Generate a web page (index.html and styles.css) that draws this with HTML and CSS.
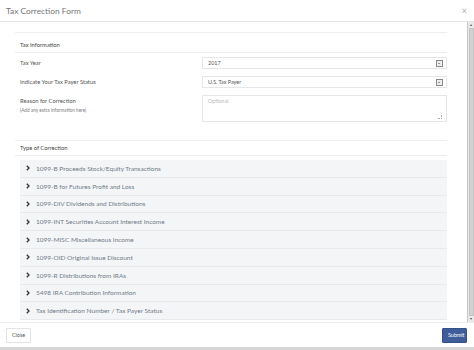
FILE: index.html
```html
<!DOCTYPE html>
<html lang="en">
<head>
    <meta charset="UTF-8">
    <title>Tax Correction Form</title>
    <link rel="stylesheet" href="styles.css">
</head>
<body>
    <div class="modal">
        <div class="modal-header">
            <span class="modal-title">Tax Correction Form</span>
            <span class="close-x">&times;</span>
        </div>

        <div class="modal-main">
            <div class="content">
                <div class="section first">
                    <div class="section-title">Tax Information</div>
                </div>

                <div class="form-row">
                    <label class="label">Tax Year</label>
                    <div class="select">
                        <span>2017</span>
                        <span class="caret"></span>
                    </div>
                </div>
                <div class="form-row">
                    <label class="label">Indicate Your Tax Payer Status</label>
                    <div class="select">
                        <span>U.S. Tax Payer</span>
                        <span class="caret"></span>
                    </div>
                </div>
                <div class="form-row">
                    <div class="label">
                        Reason for Correction
                        <div class="hint">(Add any extra information here)</div>
                    </div>
                    <div class="textarea">
                        <span class="placeholder">Optional</span>
                        <span class="grip"></span>
                    </div>
                </div>

                <div class="section">
                    <div class="section-title">Type of Correction</div>
                </div>

                <div class="accordion">
                    <div class="acc-item"><svg class="chev" viewBox="0 0 4 6"><polyline points="0.8,0.7 3,3 0.8,5.3"/></svg>1099-B Proceeds Stock/Equity Transactions</div>
                    <div class="acc-item"><svg class="chev" viewBox="0 0 4 6"><polyline points="0.8,0.7 3,3 0.8,5.3"/></svg>1099-B for Futures Profit and Loss</div>
                    <div class="acc-item"><svg class="chev" viewBox="0 0 4 6"><polyline points="0.8,0.7 3,3 0.8,5.3"/></svg>1099-DIV Dividends and Distributions</div>
                    <div class="acc-item"><svg class="chev" viewBox="0 0 4 6"><polyline points="0.8,0.7 3,3 0.8,5.3"/></svg>1099-INT Securities Account Interest Income</div>
                    <div class="acc-item"><svg class="chev" viewBox="0 0 4 6"><polyline points="0.8,0.7 3,3 0.8,5.3"/></svg>1099-MISC Miscellaneous Income</div>
                    <div class="acc-item"><svg class="chev" viewBox="0 0 4 6"><polyline points="0.8,0.7 3,3 0.8,5.3"/></svg>1099-OID Original Issue Discount</div>
                    <div class="acc-item"><svg class="chev" viewBox="0 0 4 6"><polyline points="0.8,0.7 3,3 0.8,5.3"/></svg>1099-R Distributions from IRAs</div>
                    <div class="acc-item"><svg class="chev" viewBox="0 0 4 6"><polyline points="0.8,0.7 3,3 0.8,5.3"/></svg>5498 IRA Contribution Information</div>
                    <div class="acc-item"><svg class="chev" viewBox="0 0 4 6"><polyline points="0.8,0.7 3,3 0.8,5.3"/></svg>Tax Identification Number / Tax Payer Status</div>
                </div>
            </div>

            <!-- scrollbar of the modal body -->
            <div class="scrollbar">
                <span class="arrow up"></span>
                <span class="thumb"></span>
                <span class="arrow down"></span>
            </div>
        </div>

        <div class="modal-footer">
            <button type="button" class="btn">Close</button>
            <button type="button" class="btn primary">Submit</button>
        </div>
    </div>
</body>
</html>
```

FILE: styles.css
```css
body {
    margin: 0;
    background-color: #d6d6d6;
    font-family: Lato, "Liberation Sans", sans-serif;
    color: #555;
}

.modal {
    height: 347px;
    background-color: #fff;
    display: flex;
    flex-direction: column;
}

.modal-header {
    height: 21px;
    border-bottom: 1px solid #e4e4e4;
    padding: 0 7px 0 6px;
    display: flex;
    align-items: center;
    justify-content: space-between;
}

.modal-title {
    font-size: 8.4px;
    color: #777;
}

.close-x {
    font-size: 9px;
    color: #aaa;
}

.modal-main {
    flex: 1;
    display: flex;
    overflow: hidden;
}

.content {
    flex: 1;
    padding: 10px 20px 0 15px;
    overflow: hidden;
}

.section {
    border-top: 1px solid #f0f0f0;
    margin-top: 18px;
}

.section.first {
    margin-top: 0;
    padding-top: 4px;
}

.section-title {
    height: 15px;
    line-height: 15px;
    padding-left: 5px;
    border-bottom: 1px solid #ececec;
    font-size: 5.8px;
    color: #444;
}

.section:not(.first) .section-title {
    height: 14px;
    line-height: 14px;
}

.form-row {
    display: flex;
    justify-content: space-between;
    margin-top: 4px;
}

.form-row + .form-row {
    margin-top: 7px;
}

.label {
    padding: 2px 0 0 5px;
    font-size: 5.8px;
    color: #555;
}

.hint {
    font-size: 4.7px;
    color: #808080;
    margin-top: 3px;
}

.select {
    box-sizing: border-box;
    width: 245px;
    height: 12px;
    border: 1px solid #e6e6e6;
    padding: 0 3px 0 5px;
    display: flex;
    align-items: center;
    justify-content: space-between;
    font-size: 5.4px;
    color: #555;
}

.caret {
    width: 5px;
    height: 5px;
    border: 1px solid #888;
    background-color: #eee;
    position: relative;
}

.caret::after {
    content: "";
    position: absolute;
    left: 1px;
    top: 2px;
    border-left: 1.5px solid transparent;
    border-right: 1.5px solid transparent;
    border-top: 1.5px solid #333;
}

.textarea {
    box-sizing: border-box;
    width: 245px;
    height: 27px;
    border: 1px solid #e6e6e6;
    padding: 2px 4px 2px 5px;
    display: flex;
    justify-content: space-between;
}

.placeholder {
    font-size: 5.4px;
    color: #bbb;
}

.grip {
    align-self: flex-end;
    width: 3px;
    height: 3px;
    border-right: 1px dotted #aaa;
    border-bottom: 1px dotted #aaa;
}

.accordion {
    margin: 4px 0 0 5px;
    background-color: #f4f5f7;
}

.acc-item {
    height: 16.8px;
    border-bottom: 1px solid #e7e9ec;
    display: flex;
    align-items: center;
    padding-left: 5px;
    font-size: 6.5px;
    color: #717c89;
}

.chev {
    width: 4px;
    height: 6px;
    margin: 0 6px 0 1px;
    fill: none;
    stroke: #333;
    stroke-width: 1.3;
}

.scrollbar {
    width: 6px;
    background-color: #e9e9e9;
    border-left: 1px solid #c9c9c9;
    display: flex;
    flex-direction: column;
    align-items: center;
}

.arrow {
    width: 0;
    height: 0;
    margin: 2px 0;
    border-left: 1.5px solid transparent;
    border-right: 1.5px solid transparent;
}

.arrow.up {
    border-bottom: 2px solid #555;
}

.arrow.down {
    border-top: 2px solid #555;
}

.thumb {
    flex: 1;
    width: 5px;
    background-color: #d2d2d2;
    border: 1px solid #c4c4c4;
    box-sizing: border-box;
}

.modal-footer {
    height: 24px;
    border-top: 1px solid #ececec;
    padding: 0 7px 0 6px;
    display: flex;
    align-items: center;
    justify-content: space-between;
}

.btn {
    height: 15px;
    padding: 0 5px;
    border: 1px solid #e2e2e2;
    border-radius: 1px;
    background-color: #fff;
    font-family: Lato, "Liberation Sans", sans-serif;
    font-size: 5.4px;
    color: #555;
}

.btn.primary {
    width: 25px;
    background-color: #3f5e99;
    border-color: #35518a;
    color: #fff;
}
```
